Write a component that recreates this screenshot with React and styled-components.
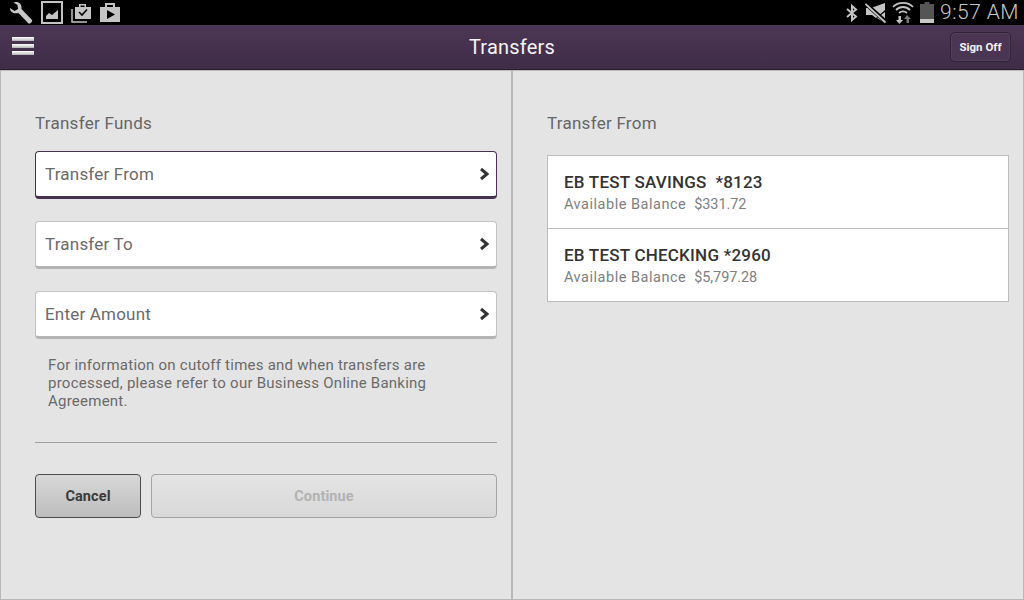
import React from 'react';
import styled, { createGlobalStyle } from 'styled-components';

const Global = createGlobalStyle`
  html, body { margin: 0; padding: 0; width: 1024px; height: 600px; overflow: hidden; background: #e4e4e4; }
  * { box-sizing: border-box; }
  body { font-family: Roboto, "Liberation Sans", sans-serif; }
`;
const Page = styled.div`width:1024px;height:600px;display:flex;flex-direction:column;`;
const StatusBar = styled.div`height:25px;background:#000;display:flex;align-items:center;justify-content:space-between;padding:0 5px 0 9px;color:#c4c4c4;`;
const StatusGroup = styled.div`display:flex;align-items:center;gap:${p => p.$gap}px;`;
const Clock = styled.span`font-size:21px;line-height:25px;font-family:Roboto,sans-serif;font-weight:300;letter-spacing:.45px;color:#c8c8c8;`;
const Header = styled.header`height:45px;background:linear-gradient(#4c3655,#3f2d47);border-bottom:1px solid #2d2033;display:flex;align-items:center;justify-content:space-between;padding:0 12px;position:relative;`;
const Burger = styled.div`width:22px;height:18px;display:flex;flex-direction:column;justify-content:space-between;margin-bottom:2px;`;
const BurgerBar = styled.span`height:4px;background:linear-gradient(#fff,#cfcfcf 70%,#aaa);`;
const Title = styled.h1`position:absolute;left:0;right:0;top:0;margin:0;text-align:center;font-size:20px;line-height:44px;font-weight:400;color:#f4f4f4;pointer-events:none;letter-spacing:.2px;`;
const SignOff = styled.button`width:61px;height:30px;border:1px solid #2f2236;border-radius:5px;background:#4a3553;color:#f2f2f2;font:700 11.5px Roboto,sans-serif;padding:0;box-shadow:inset 0 0 0 1px #55405e;margin:0 1px 1px 0;`;
const Panels = styled.main`flex:1;display:grid;grid-template-columns:513px 511px;border-top:1px solid #b8b8b8;`;
const Panel = styled.section`border-left:${p => p.$first ? '1px solid #b8b8b8' : '0'};border-right:${p => p.$first ? '2px solid #b8b8b8' : '1px solid #b8b8b8'};border-bottom:1px solid #b8b8b8;padding:41px 14px 0 34px;`;
const Heading = styled.h2`margin:0;font-size:17px;line-height:22px;font-weight:400;color:#666;letter-spacing:.26px;`;
const Fields = styled.div`display:flex;flex-direction:column;gap:22px;margin-top:17px;`;
const Field = styled.div`height:48px;background:#fff;border-radius:4px;border:1px solid ${p => p.$active ? '#46314f' : '#c2c2c2'};border-bottom:3px solid ${p => p.$active ? '#46314f' : '#b4b4b4'};display:flex;align-items:center;justify-content:space-between;padding:0 6px 0 9px;font-size:17px;color:#6a6a6a;letter-spacing:.2px;`;
const Note = styled.p`margin:17px 0 0 13px;font-size:15px;line-height:18px;color:#6a6a6a;letter-spacing:.24px;width:410px;`;
const Rule = styled.hr`margin:32px 0 0;border:0;border-top:1px solid #a0a0a0;`;
const Actions = styled.div`display:flex;gap:10px;margin-top:31px;`;
const Btn = styled.button`height:44px;border-radius:4px;font:700 14.5px Roboto,sans-serif;letter-spacing:.1px;padding:0;`;
const Cancel = styled(Btn)`width:106px;border:1px solid #4c4c4c;background:linear-gradient(#d8d8d8,#bdbdbd);color:#3a3a3a;`;
const Continue = styled(Btn)`flex:1;border:1px solid #a4a4a4;background:linear-gradient(#e4e4e4,#d8d8d8);color:#b2b2b2;`;
const AccountList = styled.div`margin-top:21px;background:#fff;border:1px solid #bcbcbc;width:462px;`;
const Account = styled.div`padding:15px 16px 0;border-top:${p => p.$first ? '0' : '1px solid #bcbcbc'};height:${p => p.$first ? '72px' : '73px'};`;
const AccountName = styled.div`font-size:17px;line-height:22px;font-weight:500;color:#333;white-space:pre;letter-spacing:.22px;`;
const Balance = styled.div`display:flex;gap:8px;margin-top:1px;font-size:14.5px;line-height:22px;color:#808080;`;
const BalanceLabel = styled.span`letter-spacing:.52px;`;
const BalanceAmount = styled.span`letter-spacing:-.1px;`;

const Chevron = () => (
  <svg width="12" height="14" viewBox="0 0 12 14"><path d="M3 2 L9 7 L3 12" fill="none" stroke="#333" strokeWidth="3" /></svg>
);
const Wrench = () => (
  <svg width="24" height="24" viewBox="0 0 24 24" fill="#c8c8c8"><path d="M1 7 L5.5 10 L9 8 L8.5 4 L4.5 1.5 C8 0 12 1.5 12.5 6 L12.5 8 L23 19 C24 20.5 21 23.5 19.5 22.5 L9.5 12 C5 13 1 11.5 1 7Z" /></svg>
);
const Picture = () => (
  <svg width="22" height="23" viewBox="0 0 22 23"><rect x="1" y="1" width="20" height="21" fill="none" stroke="#c4c4c4" strokeWidth="2" /><path d="M5 18 L5 15 L8 12 L11 14 L17 9 L17 18Z" fill="#c4c4c4" /></svg>
);
const Bag = () => (
  <svg width="21" height="20" viewBox="0 0 21 20"><path d="M1 6 V19 H16" fill="none" stroke="#c4c4c4" strokeWidth="1.5" /><path d="M4 4 H8 V1 H15 V4 H20 V16 H4Z M9.5 4 H13.5 V2.5 H9.5Z" fill="#c4c4c4" fillRule="evenodd" /><path d="M8 9 L11 12 L16 6.5" fill="none" stroke="#000" strokeWidth="1.6" /></svg>
);
const Play = () => (
  <svg width="20" height="19" viewBox="0 0 20 19"><path d="M0 4 H5 V0 H15 V4 H20 V19 H0Z M7 4 H13 V2 H7Z" fill="#c4c4c4" fillRule="evenodd" /><path d="M7 7 L15 11.5 L7 16Z" fill="#000" /></svg>
);
const Bluetooth = () => (
  <svg width="14" height="18" viewBox="0 0 14 18"><path d="M2 5 L11 12.5 L7 16 V2 L11 5.5 L2 13" fill="none" stroke="#c4c4c4" strokeWidth="2" /></svg>
);
const Mute = () => (
  <svg width="21" height="22" viewBox="0 0 21 22"><path d="M1 6 H6 L20 1 V8 L11 16 L7 13 H1Z M12 16 L20 10 V21Z" fill="#c4c4c4" /><path d="M1 2 L21 20" stroke="#000" strokeWidth="4" /><path d="M0.5 2 L20.5 20.5" stroke="#c4c4c4" strokeWidth="1.8" /></svg>
);
const Wifi = () => (
  <svg width="22" height="23" viewBox="0 0 22 23"><g fill="none" stroke="#c4c4c4" strokeWidth="1.8"><path d="M1 6 C6 0.5 16 0.5 21 6" /><path d="M4 9 C8 5 14 5 18 9" /><path d="M7 12 C9.5 10 12.5 10 15 12" /></g><path d="M6.5 15 H9 V19 H11 L7.5 23 L4 19 H6.5Z" fill="#c4c4c4" /><path d="M13 14 L17 18 H15 V22 H12.5 V18 H10Z" fill="#777" transform="translate(2 0)" /></svg>
);
const Battery = () => (
  <svg width="14" height="21" viewBox="0 0 14 21"><rect x="4.5" y="0" width="5" height="2" fill="#555" /><rect x="0" y="2" width="14" height="15" fill="#555" /><rect x="0" y="17" width="14" height="4" fill="#c8c8c8" /></svg>
);

export default function App() {
  return (
    <Page>
      <Global />
      <StatusBar>
        <StatusGroup $gap={8}><Wrench /><Picture /><Bag /><Play /></StatusGroup>
        <StatusGroup $gap={6}><Bluetooth /><Mute /><Wifi /><Battery /><Clock>9:57 AM</Clock></StatusGroup>
      </StatusBar>
      <Header>
        <Burger><BurgerBar /><BurgerBar /><BurgerBar /></Burger>
        <Title>Transfers</Title>
        <SignOff>Sign Off</SignOff>
      </Header>
      <Panels>
        <Panel $first>
          <Heading>Transfer Funds</Heading>
          <Fields>
            <Field $active>Transfer From<Chevron /></Field>
            <Field>Transfer To<Chevron /></Field>
            <Field>Enter Amount<Chevron /></Field>
          </Fields>
          <Note>For information on cutoff times and when transfers are processed, please refer to our Business Online Banking Agreement.</Note>
          <Rule />
          <Actions><Cancel>Cancel</Cancel><Continue>Continue</Continue></Actions>
        </Panel>
        <Panel>
          <Heading>Transfer From</Heading>
          <AccountList>
            <Account $first><AccountName>EB TEST SAVINGS  *8123</AccountName><Balance><BalanceLabel>Available Balance</BalanceLabel><BalanceAmount>$331.72</BalanceAmount></Balance></Account>
            <Account><AccountName>EB TEST CHECKING *2960</AccountName><Balance><BalanceLabel>Available Balance</BalanceLabel><BalanceAmount>$5,797.28</BalanceAmount></Balance></Account>
          </AccountList>
        </Panel>
      </Panels>
    </Page>
  );
}
